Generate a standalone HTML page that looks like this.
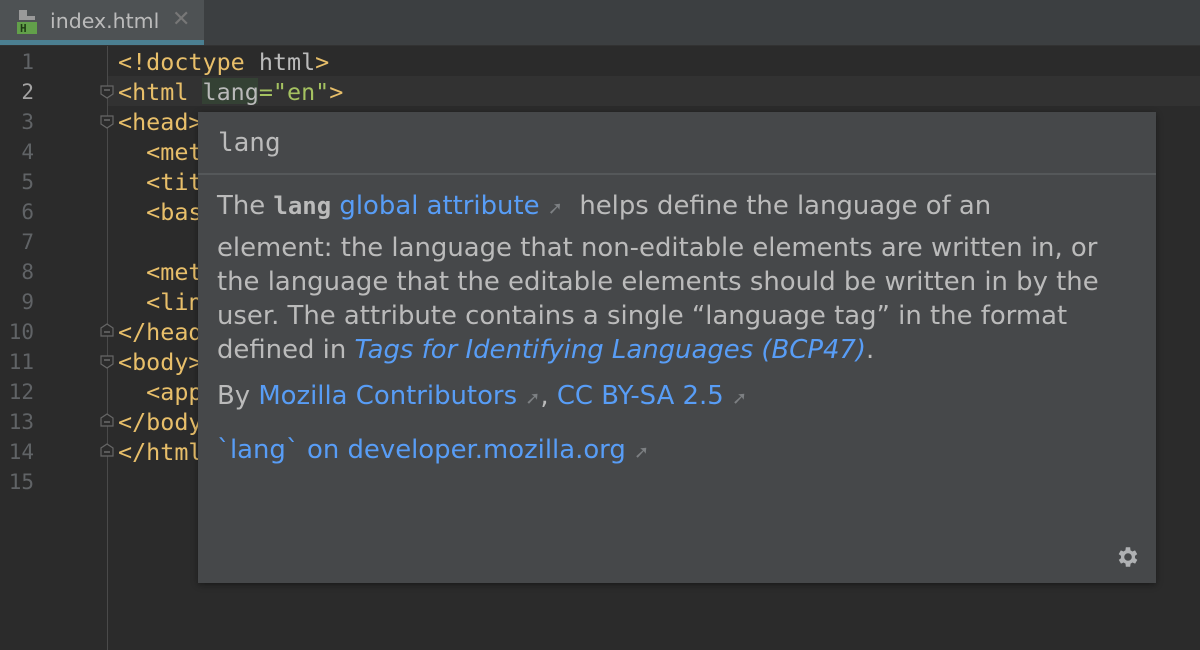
<!DOCTYPE html>
<html><head><meta charset="utf-8"><style>
body{margin:0;width:1200px;height:650px;overflow:hidden;background:#2b2b2b;position:relative;font-family:"Liberation Sans",sans-serif}
.tabbar{position:absolute;left:0;top:0;width:1200px;height:45px;background:#3c3f41;border-bottom:1px solid #323232}
.tab{position:absolute;left:0;top:0;width:204px;height:40px;background:#4e5254;border-bottom:5px solid #4b7f91}
.tab .name{position:absolute;left:50px;top:9px;color:#bbbbbb;font:20.5px "DejaVu Sans",sans-serif}
.tab .x{position:absolute;left:172px;top:6px;color:#777;font-size:22px}
.gl{position:absolute;left:107px;top:46px;width:1px;height:604px;background:#4a4a4a}
.ln{position:absolute;left:0;width:34px;text-align:right;color:#606366;font:21px "DejaVu Sans Mono",monospace}
.code{position:absolute;left:118px;font:23.4px "DejaVu Sans Mono",monospace;color:#e8bf6a;white-space:pre}
.cur{position:absolute;left:108px;top:76px;width:1092px;height:30px;background:#323232}
.fold{position:absolute;left:100px;width:14px;height:14px}
.pop{position:absolute;left:198px;top:112px;width:958px;height:471px;background:#46484a;box-shadow:0 2px 6px rgba(0,0,0,.4)}
.hd{position:absolute;left:0;top:0;width:958px;height:61px;border-bottom:2px solid #55585a}
.hd span{position:absolute;left:20px;top:16px;font:26px "DejaVu Sans Mono",monospace;color:#bbbbbb}
.t{position:absolute;left:19px;font:25.9px "DejaVu Sans",sans-serif;color:#bbbbbb;white-space:nowrap}
a{color:#589df6;text-decoration:none}
.ar{color:#7d8083;font-size:18px}
b.c{font-family:"DejaVu Sans Mono",monospace;font-size:24px}
</style></head><body>
<div class="tabbar"><div class="tab">
<svg style="position:absolute;left:14px;top:8px" width="30" height="30"><path d="M5 2h8v6h8v4H5z" fill="#9a9a9a"/><rect x="3" y="14" width="20" height="12" fill="#62a04a"/><text x="6" y="24" font-family="DejaVu Sans Mono" font-weight="bold" font-size="11" fill="#1e3a14">H</text></svg>
<span class="name">index.html</span><span class="x">✕</span></div></div>
<div class="cur"></div>
<div style="position:absolute;left:202px;top:78px;width:56px;height:26px;background:#344134"></div>
<div class="gl"></div>
<div class="ln" style="top:50px">1</div><div class="ln" style="top:80px;color:#a4a3a3">2</div><div class="ln" style="top:110px">3</div><div class="ln" style="top:140px">4</div><div class="ln" style="top:170px">5</div><div class="ln" style="top:200px">6</div><div class="ln" style="top:230px">7</div><div class="ln" style="top:260px">8</div><div class="ln" style="top:290px">9</div><div class="ln" style="top:320px">10</div><div class="ln" style="top:350px">11</div><div class="ln" style="top:380px">12</div><div class="ln" style="top:410px">13</div><div class="ln" style="top:440px">14</div><div class="ln" style="top:470px">15</div>
<svg class="fold" style="top:85px" viewBox="0 0 14 14"><path d="M1 1h12v8l-6 4-6-4z" fill="#2b2b2b" stroke="#666" stroke-width="1.2"/><path d="M4 5h6" stroke="#888"/></svg>
<svg class="fold" style="top:115px" viewBox="0 0 14 14"><path d="M1 1h12v8l-6 4-6-4z" fill="#2b2b2b" stroke="#666" stroke-width="1.2"/><path d="M4 5h6" stroke="#888"/></svg>
<svg class="fold" style="top:355px" viewBox="0 0 14 14"><path d="M1 1h12v8l-6 4-6-4z" fill="#2b2b2b" stroke="#666" stroke-width="1.2"/><path d="M4 5h6" stroke="#888"/></svg>
<svg class="fold" style="top:323px" viewBox="0 0 14 14"><path d="M1 13h12V5L7 1 1 5z" fill="#2b2b2b" stroke="#666" stroke-width="1.2"/><path d="M4 9h6" stroke="#888"/></svg>
<svg class="fold" style="top:413px" viewBox="0 0 14 14"><path d="M1 13h12V5L7 1 1 5z" fill="#2b2b2b" stroke="#666" stroke-width="1.2"/><path d="M4 9h6" stroke="#888"/></svg>
<svg class="fold" style="top:443px" viewBox="0 0 14 14"><path d="M1 13h12V5L7 1 1 5z" fill="#2b2b2b" stroke="#666" stroke-width="1.2"/><path d="M4 9h6" stroke="#888"/></svg>
<div class="code" style="top:48px">&lt;!doctype <span style="color:#bbb">html</span>&gt;</div>
<div class="code" style="top:78px">&lt;html <span style="color:#bababa">lang</span><span style="color:#a5c261">="en"</span>&gt;</div>
<div class="code" style="top:108px">&lt;head&gt;</div>
<div class="code" style="top:138px">  &lt;meta</div>
<div class="code" style="top:168px">  &lt;title</div>
<div class="code" style="top:198px">  &lt;base</div>
<div class="code" style="top:258px">  &lt;meta</div>
<div class="code" style="top:288px">  &lt;link</div>
<div class="code" style="top:318px">&lt;/head</div>
<div class="code" style="top:348px">&lt;body&gt;</div>
<div class="code" style="top:378px">  &lt;app</div>
<div class="code" style="top:408px">&lt;/body</div>
<div class="code" style="top:438px">&lt;/html</div>
<div class="pop">
<div class="hd"><span>lang</span></div>
<div class="t" style="top:79px">The <b class="c">lang</b> <a>global attribute</a> <span class="ar">➚</span>&nbsp; helps define the language of an</div>
<div class="t" style="top:121px">element: the language that non-editable elements are written in, or</div>
<div class="t" style="top:155px">the language that the editable elements should be written in by the</div>
<div class="t" style="top:189px">user. The attribute contains a single “language tag” in the format</div>
<div class="t" style="top:223px">defined in <a><i>Tags for Identifying Languages (BCP47)</i></a>.</div>
<div class="t" style="top:269px">By <a>Mozilla Contributors</a> <span class="ar">➚</span>, <a>CC BY-SA 2.5</a> <span class="ar">➚</span></div>
<div class="t" style="top:323px"><a>`lang` on developer.mozilla.org</a> <span class="ar">➚</span></div>
<svg style="position:absolute;left:917px;top:432px" width="26" height="26" viewBox="0 0 24 24"><path fill="#afb1b3" d="M19.4 13a7.5 7.5 0 000-2l2.1-1.6-2-3.5-2.5 1a7 7 0 00-1.7-1L15 3h-4l-.4 2.9a7 7 0 00-1.7 1l-2.5-1-2 3.5L6.6 11a7.5 7.5 0 000 2l-2.1 1.6 2 3.5 2.5-1a7 7 0 001.7 1L11 21h4l.4-2.9a7 7 0 001.7-1l2.5 1 2-3.5zM13 15.5a3.5 3.5 0 110-7 3.5 3.5 0 010 7z" transform="translate(-1 0)"/></svg>
</div>
</body></html>
